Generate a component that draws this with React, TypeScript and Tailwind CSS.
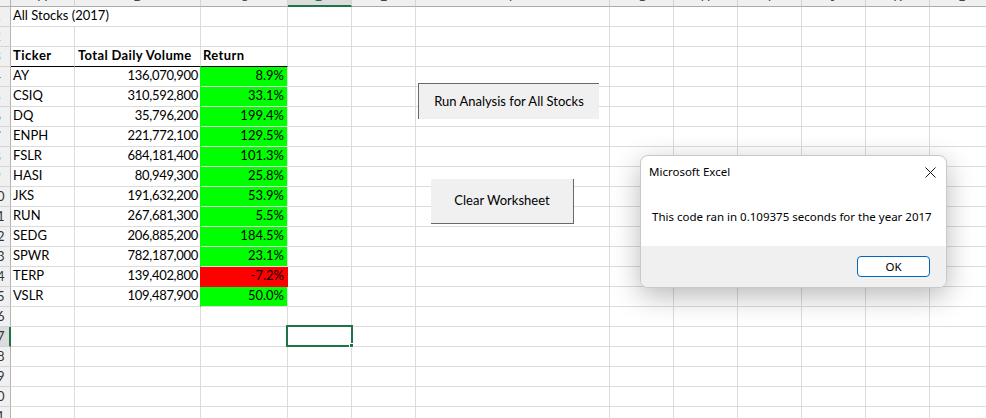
import React from 'react'

const COLS = ['A', 'B', 'C', 'D', 'E', 'F', 'G', 'H', 'I', 'J', 'K', 'L']

const STOCKS = [
  { t: 'AY', v: '136,070,900', r: '8.9%' },
  { t: 'CSIQ', v: '310,592,800', r: '33.1%' },
  { t: 'DQ', v: '35,796,200', r: '199.4%' },
  { t: 'ENPH', v: '221,772,100', r: '129.5%' },
  { t: 'FSLR', v: '684,181,400', r: '101.3%' },
  { t: 'HASI', v: '80,949,300', r: '25.8%' },
  { t: 'JKS', v: '191,632,200', r: '53.9%' },
  { t: 'RUN', v: '267,681,300', r: '5.5%' },
  { t: 'SEDG', v: '206,885,200', r: '184.5%' },
  { t: 'SPWR', v: '782,187,000', r: '23.1%' },
  { t: 'TERP', v: '139,402,800', r: '-7.2%', neg: true },
  { t: 'VSLR', v: '109,487,900', r: '50.0%' },
]

const cell = 'h-5 border-b border-r border-[#dcdcdc] flex items-end pb-[1px] whitespace-nowrap overflow-hidden'

function RowHead({ n }: { n: number }) {
  const sel = n === 17
  return (
    <div className={`h-5 overflow-hidden border-b border-[#d4d4d4] flex items-center ${sel ? 'bg-[#dcdcdc] border-r-2 border-r-[#217346]' : 'bg-[#f0f0f0] border-r border-r-[#b4b4b4]'}`}>
      <div className="w-[26px] ml-[-16px] shrink-0 text-center text-[#333]">{n}</div>
    </div>
  )
}

function Row({ n }: { n: number }) {
  const s = n >= 4 && n <= 15 ? STOCKS[n - 4] : null
  const blanks = (from: number) =>
    COLS.slice(from).map(c => <div key={c + n} className={cell} />)

  if (n === 1) {
    return (
      <>
        <RowHead n={n} />
        <div className={`${cell} col-span-2 pl-[2px]`}>All Stocks (2017)</div>
        {blanks(2)}
      </>
    )
  }
  if (n === 3) {
    return (
      <>
        <RowHead n={n} />
        <div className={`${cell} border-b-black pl-[2px] font-bold tracking-[0.5px]`}>Ticker</div>
        <div className={`${cell} border-b-black pl-[3px] font-bold tracking-[0.35px]`}>Total Daily Volume</div>
        <div className={`${cell} border-b-black pl-[2px] font-bold tracking-[0.4px]`}>Return</div>
        {blanks(3)}
      </>
    )
  }
  if (s) {
    return (
      <>
        <RowHead n={n} />
        <div className={`${cell} pl-[2px]`}>{s.t}</div>
        <div className={`${cell} justify-end pr-[2px] tabular-nums tracking-[-0.3px]`}>{s.v}</div>
        <div className={`${cell} justify-end pr-[3px] tabular-nums ${s.neg ? 'bg-[#ff0000] border-[#ff0000] shadow-[-1px_0_0_#ff0000]' : 'bg-[#00ff00] border-[#00ff00] shadow-[-1px_0_0_#00ff00]'}`}>{s.r}</div>
        {blanks(3)}
      </>
    )
  }
  return (
    <>
      <RowHead n={n} />
      {blanks(0)}
    </>
  )
}

export default function App() {
  const rows = Array.from({ length: 21 }, (_, i) => i + 1)
  return (
    <div className="relative w-[986px] h-[418px] overflow-hidden bg-white font-['Lato',sans-serif] text-[13px] text-black">
      <div className="grid grid-cols-[11px_64px_126px_87px_64px_64px_194px_64px_64px_64px_64px_64px_64px] auto-rows-min w-max">
        {/* column header strip, only its lower edge is in view */}
        <div className="h-[7px] bg-[#f0f0f0] border-b border-r border-[#b4b4b4]" />
        {COLS.map(c => (
          <div key={c} className={`h-[7px] overflow-hidden border-r border-[#d4d4d4] ${c === 'D' ? 'bg-[#dcdcdc] border-b-2 border-b-[#217346] text-[#217346]' : 'bg-[#f0f0f0] border-b border-b-[#ababab] text-[#444]'}`}>
            <div className="h-5 mt-[-14px] leading-5 text-center">{c}</div>
          </div>
        ))}
        {rows.map(n => <Row key={n} n={n} />)}
      </div>

      {/* selected cell D17 */}
      <div className="absolute left-[286px] top-[325px] w-[67px] h-[22px] border-2 border-[#217346]" />
      <div className="absolute left-[349px] top-[343px] w-[5px] h-[5px] bg-[#217346] border border-white" />

      {/* form buttons */}
      <div className="absolute left-[418px] top-[83px] w-[181px] h-[36px] bg-[#f0f0f0] border-t border-l border-[#696969] flex items-center justify-center">
        Run Analysis for All Stocks
      </div>
      <div className="absolute left-[431px] top-[179px] w-[143px] h-[45px] bg-[#f0f0f0] border-r border-b border-[#696969] flex items-center justify-center">
        Clear Worksheet
      </div>

      {/* message box */}
      <div className="absolute left-[640px] top-[155px] w-[307px] h-[133px] rounded-lg bg-white border border-[#c8c8c8] shadow-[0_8px_28px_rgba(0,0,0,0.28)] overflow-hidden flex flex-col font-['Noto_Sans',sans-serif] text-[11.5px]">
        <div className="h-[32px] flex items-center justify-between pl-[8px] pr-[10px]">
          <span>Microsoft Excel</span>
          <svg width="11" height="11" viewBox="0 0 11 11">
            <path d="M0.5 0.5 L10.5 10.5 M10.5 0.5 L0.5 10.5" stroke="#1a1a1a" strokeWidth="1" />
          </svg>
        </div>
        <div className="h-[58px] flex items-center pl-[11px]">This code ran in 0.109375 seconds for the year 2017</div>
        <div className="flex-1 bg-[#f0f0f0] flex justify-end items-start pt-[10px] pr-[16px]">
          <div className="w-[73px] h-[21px] rounded-[4px] border-[1.5px] border-[#0067c0] bg-white flex items-center justify-center">OK</div>
        </div>
      </div>
    </div>
  )
}
